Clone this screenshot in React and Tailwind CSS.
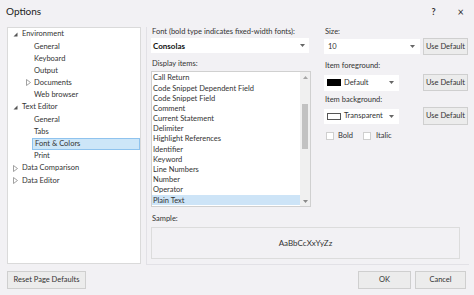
import React from 'react';

const font = { fontFamily: 'Lato, "Noto Sans", sans-serif' };

const Expanded = () => (
  <svg width="5" height="5" viewBox="0 0 5 5" className="shrink-0">
    <path d="M4.5 0.5 L4.5 4.5 L0.5 4.5 Z" fill="#555" />
  </svg>
);

const Collapsed = () => (
  <svg width="5" height="7" viewBox="0 0 5 7" className="shrink-0">
    <path d="M0.5 0.5 L4.5 3.5 L0.5 6.5 Z" fill="none" stroke="#8a8a8a" strokeWidth="0.8" />
  </svg>
);

const Arrow = () => (
  <svg width="5" height="3" viewBox="0 0 5 3" className="shrink-0">
    <path d="M0 0 L5 0 L2.5 3 Z" fill="#666" />
  </svg>
);

const treeItems = [
  { label: 'Environment', level: 0, exp: 'open' },
  { label: 'General', level: 1 },
  { label: 'Keyboard', level: 1 },
  { label: 'Output', level: 1 },
  { label: 'Documents', level: 1, exp: 'closed' },
  { label: 'Web browser', level: 1 },
  { label: 'Text Editor', level: 0, exp: 'open' },
  { label: 'General', level: 1 },
  { label: 'Tabs', level: 1 },
  { label: 'Font & Colors', level: 1, selected: true },
  { label: 'Print', level: 1 },
  { label: 'Data Comparison', level: 0, exp: 'closed' },
  { label: 'Data Editor', level: 0, exp: 'closed' },
];

const displayItems = [
  'Call Return',
  'Code Snippet Dependent Field',
  'Code Snippet Field',
  'Comment',
  'Current Statement',
  'Delimiter',
  'Highlight References',
  'Identifier',
  'Keyword',
  'Line Numbers',
  'Number',
  'Operator',
  'Plain Text',
  'Preprocessor Keyword',
];

const Button = ({ children, className = '' }) => (
  <div className={`flex items-center justify-center whitespace-nowrap border border-[#cfcfcf] bg-[#ececec] text-[7.5px] text-[#333] ${className}`}>
    {children}
  </div>
);

const TreeRow = ({ item }) => {
  const indentIcon = item.level === 0 ? 'w-[14px] pl-[5px]' : 'w-[26px] pl-[18px]';
  return (
    <div className="flex h-[12.2px] items-center">
      <div className={`flex ${indentIcon} shrink-0 items-center`}>
        {item.exp === 'open' && <Expanded />}
        {item.exp === 'closed' && <Collapsed />}
      </div>
      <div
        className={`flex h-full items-center ${
          item.selected ? 'flex-1 -ml-[2px] pl-[2px] border border-[#8fc3ee] bg-[#cde6f8]' : ''
        }`}
      >
        {item.label}
      </div>
    </div>
  );
};

export default function App() {
  return (
    <div className="flex h-[295px] w-[474px] flex-col overflow-hidden whitespace-nowrap bg-[#f2f1f4] text-[7.5px] leading-none text-[#333]" style={font}>
      {/* title bar */}
      <div className="flex h-[22px] shrink-0 items-center pl-[6px] pr-[10px]">
        <div className="text-[10px] text-[#222]">Options</div>
        <div className="ml-auto flex items-center gap-[22px] text-[9px] text-[#333]">
          <span className="font-bold">?</span>
          <span className="text-[11px]">×</span>
        </div>
      </div>

      {/* body */}
      <div className="flex h-[243px] shrink-0 pt-[5px]">
        <div className="ml-[7px] h-[237px] w-[134px] border border-[#dadada] bg-white">
          {treeItems.map((it, i) => (
            <TreeRow key={i} item={it} />
          ))}
        </div>

        <div className="ml-[5px] flex h-[238px] w-[323px] flex-col border-b border-l border-[#e2e1e6] pl-[4px]">
          <div className="flex">
            <div className="flex w-[160px] flex-col">
              <div className="flex h-[10px] items-center pl-[1px]">Font (bold type indicates fixed-width fonts):</div>
              <div className="mt-[1px] flex h-[15px] w-[158px] items-center bg-white pl-[2px] pr-[4px]">
                <span className="text-[8px] font-bold text-[#111]">Consolas</span>
                <span className="ml-auto"><Arrow /></span>
              </div>
              <div className="mt-[6px] flex h-[10px] items-center pl-[1px]">Display items:</div>
              <div className="mt-[2px] flex h-[136px] w-[160px] border border-[#d0d0d0] bg-white">
                <div className="flex-1 overflow-hidden pt-[1px]">
                  {displayItems.map((d) => (
                    <div
                      key={d}
                      className={`flex h-[10.2px] items-center pl-[1px] ${d === 'Plain Text' ? 'bg-[#cde4f7]' : ''}`}
                    >
                      {d}
                    </div>
                  ))}
                </div>
                <div className="flex w-[10px] flex-col items-center bg-[#f0f0f0]">
                  <svg width="5" height="3" viewBox="0 0 5 3" className="mt-[4px]">
                    <path d="M0 3 L5 3 L2.5 0 Z" fill="#a6a6a6" />
                  </svg>
                  <div className="mt-[25px] h-[45px] w-[6px] bg-[#c2c2c2]" />
                  <svg width="5" height="3" viewBox="0 0 5 3" className="mb-[3px] mt-auto">
                    <path d="M0 0 L5 0 L2.5 3 Z" fill="#8a8a8a" />
                  </svg>
                </div>
              </div>
            </div>

            <div className="ml-[13px] flex w-[145px] flex-col">
              <div className="flex h-[10px] items-center pl-[1px]">Size:</div>
              <div className="mt-[1px] flex items-center">
                <div className="flex h-[15px] w-[96px] items-center bg-white pl-[4px] pr-[5px]">
                  <span>10</span>
                  <span className="ml-auto"><Arrow /></span>
                </div>
                <Button className="ml-[3px] h-[17px] w-[45px]">Use Default</Button>
              </div>
              <div className="mt-[6px] flex h-[10px] items-center pl-[1px]">Item foreground:</div>
              <div className="mt-[3px] flex items-center">
                <div className="flex h-[16px] w-[75px] items-center bg-white pl-[3px] pr-[5px]">
                  <div className="h-[7px] w-[14px] bg-black" />
                  <span className="ml-[3px]">Default</span>
                  <span className="ml-auto"><Arrow /></span>
                </div>
                <Button className="ml-[24px] h-[17px] w-[45px]">Use Default</Button>
              </div>
              <div className="mt-[4px] flex h-[10px] items-center pl-[1px]">Item background:</div>
              <div className="mt-[2px] flex items-center">
                <div className="flex h-[15px] w-[75px] items-center bg-white pl-[3px] pr-[5px]">
                  <div className="h-[7px] w-[14px] border border-[#555] bg-white" />
                  <span className="ml-[3px]">Transparent</span>
                  <span className="ml-auto"><Arrow /></span>
                </div>
                <Button className="ml-[24px] h-[18px] w-[45px]">Use Default</Button>
              </div>
              <div className="mt-[7px] flex items-center pl-[2px]">
                <div className="h-[8px] w-[8px] border border-[#cfcfcf] bg-white" />
                <span className="ml-[4px]">Bold</span>
                <div className="ml-[10px] h-[8px] w-[8px] border border-[#cfcfcf] bg-white" />
                <span className="ml-[5px]">Italic</span>
              </div>
            </div>
          </div>

          <div className="mt-[7px] flex h-[10px] items-center pl-[1px]">Sample:</div>
          <div className="mt-[3px] flex h-[32px] w-[309px] items-center justify-center border border-[#dcdcdc] bg-[#f2f1f4]">
            <span className="text-[8px]">AaBbCcXxYyZz</span>
          </div>
        </div>
      </div>

      {/* footer */}
      <div className="flex items-center pt-[6px] pr-[8px]">
        <Button className="ml-[7px] h-[18px] w-[79px]">Reset Page Defaults</Button>
        <Button className="ml-auto h-[18px] w-[53px] border-[#6fa7dd]">OK</Button>
        <Button className="ml-[4px] h-[18px] w-[51px]">Cancel</Button>
      </div>
    </div>
  );
}
